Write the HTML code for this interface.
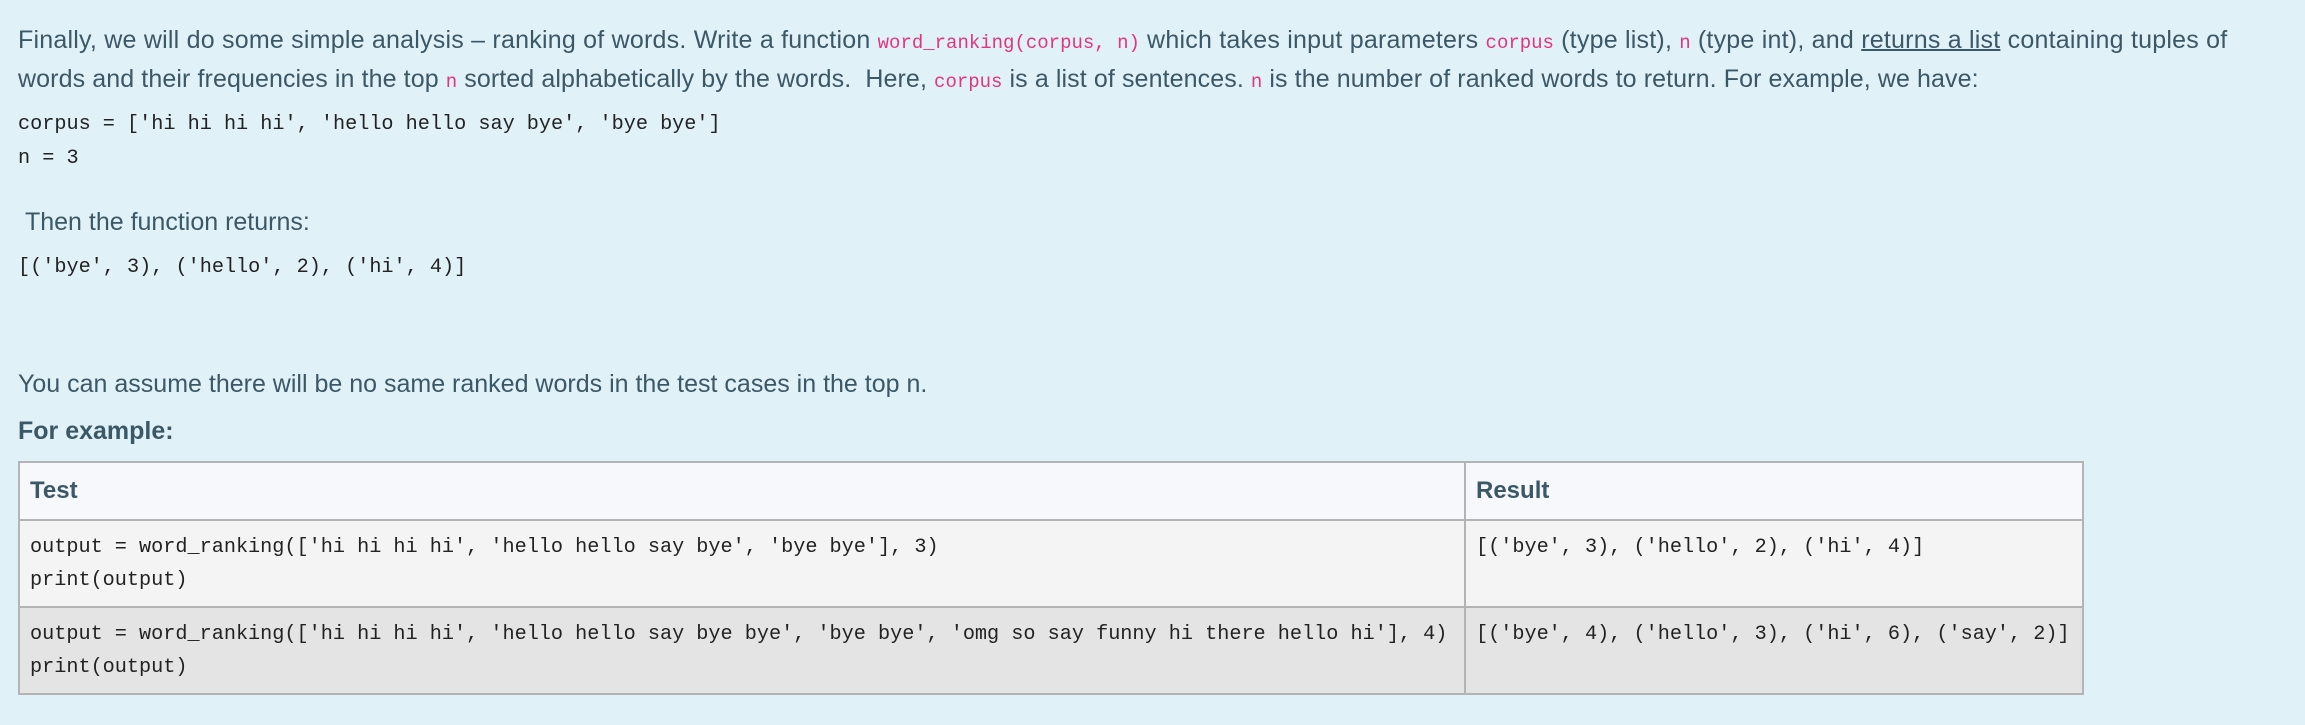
<!DOCTYPE html>
<html><head><meta charset="utf-8">
<style>
html,body{margin:0;padding:0;}
body{width:2305px;height:725px;background:#e1f1f8;position:relative;overflow:hidden;font-family:"Liberation Sans",sans-serif;color:#3b5866;}
.l{position:absolute;left:18px;white-space:nowrap;font-size:25px;line-height:30px;}
code{font-family:"Liberation Mono",monospace;color:#e0357f;font-size:19px;letter-spacing:0;}
.pre{position:absolute;left:18px;white-space:nowrap;font-family:"Liberation Mono",monospace;font-size:20.2px;color:#222;line-height:30px;}
u{text-decoration:underline;text-decoration-thickness:2px;}
table{position:absolute;left:18px;top:461px;width:2066px;border-collapse:collapse;table-layout:fixed;}
td,th{border:2px solid #b4b4b4;text-align:left;vertical-align:top;padding:0 10px;box-sizing:border-box;}
th{background:#f7f8fc;height:58px;font-size:24px;font-weight:bold;vertical-align:middle;color:#3b5866;}
td{font-family:"Liberation Mono",monospace;font-size:20.2px;color:#222;line-height:33px;height:87px;padding-top:10px;white-space:nowrap;}
tr.r1 td{background:#f4f4f4;}
tr.r2 td{background:#e4e4e4;}
</style></head><body>
<div class="l" style="top:25px;letter-spacing:0.22px">Finally, we will do some simple analysis – ranking of words. Write a function <code>word_ranking(corpus, n)</code> which takes input parameters <code>corpus</code> (type list), <code>n</code> (type int), and <u>returns a list</u> containing tuples of</div>
<div class="l" style="top:64px;letter-spacing:0.1px">words and their frequencies in the top <code>n</code> sorted alphabetically by the words.&nbsp; Here, <code>corpus</code> is a list of sentences. <code>n</code> is the number of ranked words to return. For example, we have:</div>
<div class="pre" style="top:110px">corpus = ['hi hi hi hi', 'hello hello say bye', 'bye bye']</div>
<div class="pre" style="top:144px">n = 3</div>
<div class="l" style="top:207px">&nbsp;Then the function returns:</div>
<div class="pre" style="top:253px">[('bye', 3), ('hello', 2), ('hi', 4)]</div>
<div class="l" style="top:369px">You can assume there will be no same ranked words in the test cases in the top n.</div>
<div class="l" style="top:416px;font-weight:bold">For example:</div>
<table>
<colgroup><col style="width:1446px"><col></colgroup>
<tr><th>Test</th><th>Result</th></tr>
<tr class="r1"><td>output = word_ranking(['hi hi hi hi', 'hello hello say bye', 'bye bye'], 3)<br>print(output)</td><td>[('bye', 3), ('hello', 2), ('hi', 4)]</td></tr>
<tr class="r2"><td>output = word_ranking(['hi hi hi hi', 'hello hello say bye bye', 'bye bye', 'omg so say funny hi there hello hi'], 4)<br>print(output)</td><td>[('bye', 4), ('hello', 3), ('hi', 6), ('say', 2)]</td></tr>
</table>
</body></html>
